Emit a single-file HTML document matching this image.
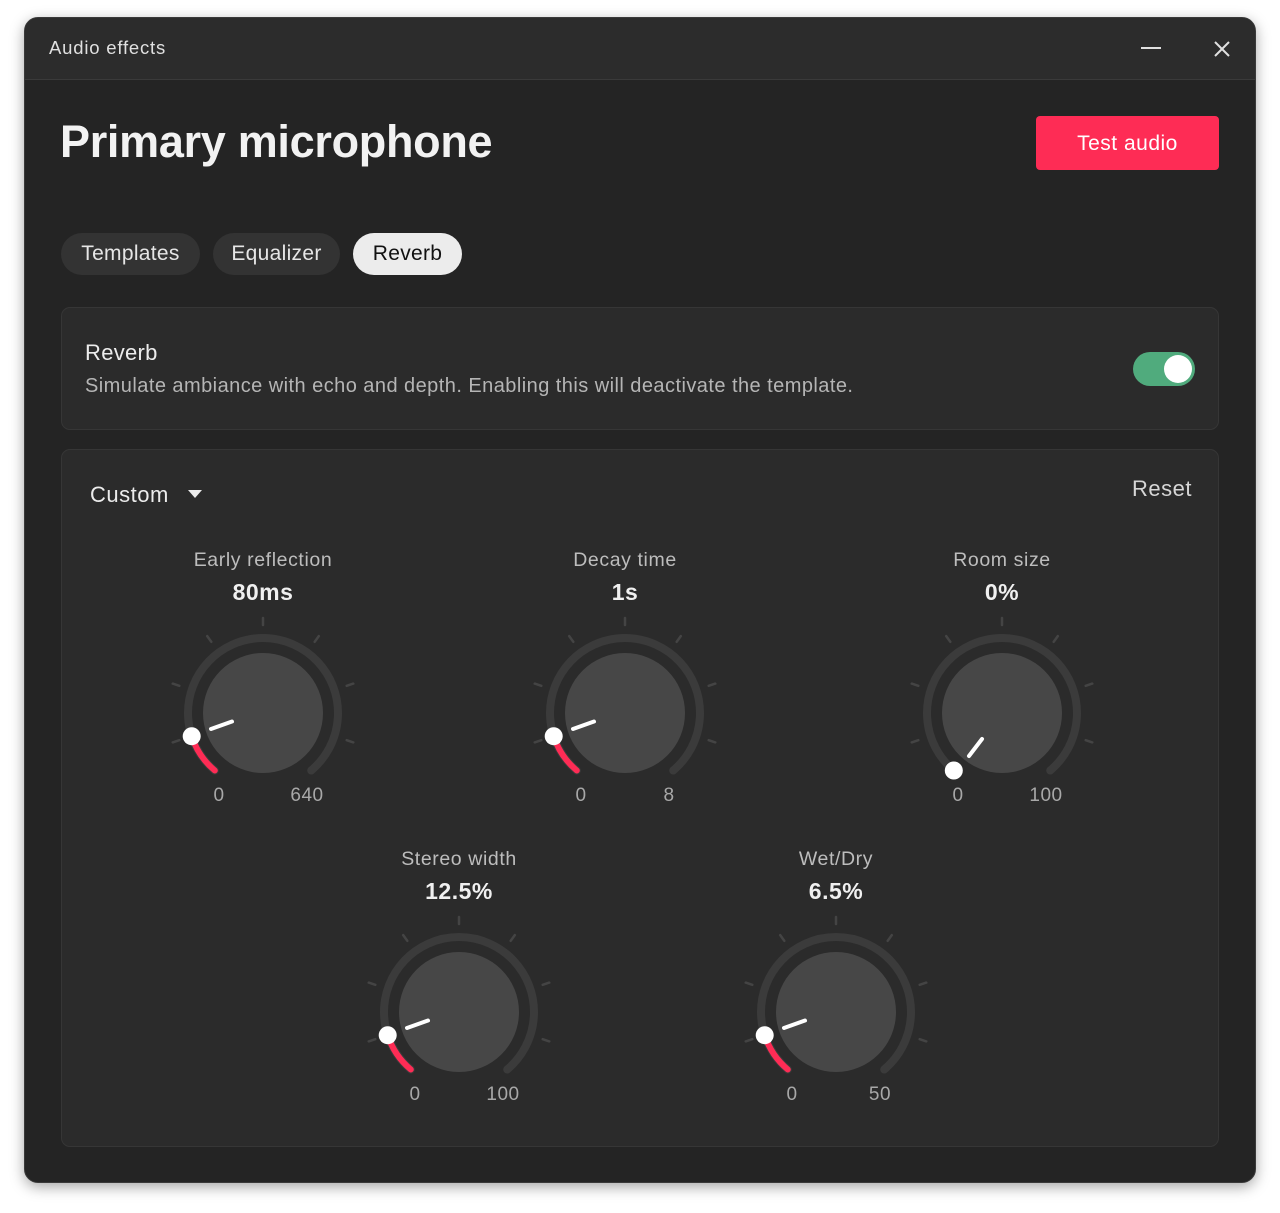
<!DOCTYPE html>
<html><head><meta charset="utf-8"><style>
*{margin:0;padding:0;box-sizing:border-box}
body{width:1280px;height:1213px;background:#fff;font-family:"Liberation Sans",sans-serif;position:relative;overflow:hidden}
.win{position:absolute;left:24px;top:17px;width:1232px;height:1166px;background:#242424;border-radius:14px;overflow:hidden;box-shadow:0 4px 14px rgba(0,0,0,.35);border:1px solid #3a3a3a}
.tb{position:absolute;left:0;top:0;right:0;height:62px;background:#2c2c2c;border-bottom:1px solid #3a3a3a}
.a{position:absolute}
.tab{position:absolute;top:233px;height:42px;border-radius:21px;background:#333;color:#e6e6e6;font-size:21px;line-height:42px;text-align:center;letter-spacing:.3px}
.panel{position:absolute;left:61px;width:1158px;background:#2b2b2b;border:1px solid #363636;border-radius:9px}
.lbl{position:absolute;width:240px;text-align:center;color:#bdbdbd;font-size:19.5px;letter-spacing:.6px}
.val{position:absolute;width:240px;text-align:center;color:#f0f0f0;font-size:23px;font-weight:bold;letter-spacing:.5px}
.mm{position:absolute;color:#a8a8a8;font-size:19px;width:60px;text-align:center;letter-spacing:.5px}
svg.k{position:absolute;width:200px;height:200px}
</style></head><body>
<div class="win">
<div class="tb"><div class="a" style="left:24px;top:19px;color:#e0e0e0;font-size:18.5px;letter-spacing:.8px">Audio effects</div>
<svg class="a" style="left:1114px;top:20px" width="24" height="20"><line x1="2" y1="10" x2="22" y2="10" stroke="#e0e0e0" stroke-width="2"/></svg>
<svg class="a" style="left:1186px;top:20px" width="22" height="22"><path d="M4 4L18 18M18 4L4 18" stroke="#e0e0e0" stroke-width="2"/></svg>
</div>
</div>
<div class="a" style="left:60px;top:116px;color:#f2f2f2;font-size:45px;font-weight:bold;letter-spacing:-0.3px">Primary microphone</div>
<div class="a" style="left:1036px;top:116px;width:183px;height:54px;background:#fe2c55;border-radius:4px;color:#fff;font-size:21px;line-height:56px;text-align:center;letter-spacing:.5px">Test audio</div>
<div class="tab" style="left:61px;width:139px">Templates</div>
<div class="tab" style="left:213px;width:127px">Equalizer</div>
<div class="tab" style="left:353px;width:109px;background:#ececec;color:#111">Reverb</div>
<div class="panel" style="top:307px;height:123px">
<div class="a" style="left:23px;top:32px;color:#ececec;font-size:22px;letter-spacing:.3px">Reverb</div>
<div class="a" style="left:23px;top:67px;color:#b5b5b5;font-size:20px;letter-spacing:.45px">Simulate ambiance with echo and depth. Enabling this will deactivate the template.</div>
<div class="a" style="left:1071px;top:44px;width:62px;height:34px;border-radius:17px;background:#50ab7d"><div class="a" style="left:31px;top:3px;width:28px;height:28px;border-radius:50%;background:#fff"></div></div>
</div>
<div class="panel" style="top:449px;height:698px">
<div class="a" style="left:28px;top:32px;color:#ececec;font-size:22px;letter-spacing:.5px">Custom</div>
<svg class="a" style="left:126px;top:39px" width="14" height="10"><path d="M0 1H14L7 9Z" fill="#ececec"/></svg>
<div class="a" style="left:1070px;top:26px;color:#d6d6d6;font-size:22px;letter-spacing:.5px">Reset</div>
</div>

<svg width="0" height="0" style="position:absolute"><defs>
<g id="base">
<g stroke="#444" stroke-width="2.5" stroke-linecap="round">
<line x1="0" y1="-88" x2="0" y2="-95"/>
<line x1="51.7" y1="-71.2" x2="55.8" y2="-76.9"/><line x1="-51.7" y1="-71.2" x2="-55.8" y2="-76.9"/>
<line x1="83.7" y1="-27.2" x2="90.3" y2="-29.4"/><line x1="-83.7" y1="-27.2" x2="-90.3" y2="-29.4"/>
<line x1="83.7" y1="27.2" x2="90.3" y2="29.4"/><line x1="-83.7" y1="27.2" x2="-90.3" y2="29.4"/>
</g>
<path d="M-48.2 57.5A75 75 0 1 1 48.2 57.5" fill="none" stroke="#3b3b3b" stroke-width="8" stroke-linecap="round"/>
<circle r="60" fill="#474747"/>
</g>
<g id="v1">
<use href="#base"/>
<path d="M-48.2 57.5A75 75 0 0 1 -71.3 23.2" fill="none" stroke="#fe2c55" stroke-width="6" stroke-linecap="round"/>
<line x1="-52" y1="16" x2="-31" y2="8.5" stroke="#fff" stroke-width="4" stroke-linecap="round"/>
<circle cx="-71.3" cy="23.2" r="9" fill="#fff"/>
</g>
</defs></svg>

<svg class="k" style="left:163px;top:613px" viewBox="-100 -100 200 200"><use href="#v1"/></svg>
<svg class="k" style="left:525px;top:613px" viewBox="-100 -100 200 200"><use href="#v1"/></svg>
<svg class="k" style="left:902px;top:613px" viewBox="-100 -100 200 200"><use href="#base"/><line x1="-33" y1="43" x2="-20" y2="26" stroke="#fff" stroke-width="4" stroke-linecap="round"/><circle cx="-48.2" cy="57.5" r="9" fill="#fff"/></svg>
<svg class="k" style="left:359px;top:912px" viewBox="-100 -100 200 200"><use href="#v1"/></svg>
<svg class="k" style="left:736px;top:912px" viewBox="-100 -100 200 200"><use href="#v1"/></svg>

<div class="lbl" style="left:143px;top:549px">Early reflection</div><div class="val" style="left:143px;top:579px">80ms</div>
<div class="mm" style="left:189px;top:785px">0</div><div class="mm" style="left:277px;top:785px">640</div>
<div class="lbl" style="left:505px;top:549px">Decay time</div><div class="val" style="left:505px;top:579px">1s</div>
<div class="mm" style="left:551px;top:785px">0</div><div class="mm" style="left:639px;top:785px">8</div>
<div class="lbl" style="left:882px;top:549px">Room size</div><div class="val" style="left:882px;top:579px">0%</div>
<div class="mm" style="left:928px;top:785px">0</div><div class="mm" style="left:1016px;top:785px">100</div>
<div class="lbl" style="left:339px;top:848px">Stereo width</div><div class="val" style="left:339px;top:878px">12.5%</div>
<div class="mm" style="left:385px;top:1084px">0</div><div class="mm" style="left:473px;top:1084px">100</div>
<div class="lbl" style="left:716px;top:848px">Wet/Dry</div><div class="val" style="left:716px;top:878px">6.5%</div>
<div class="mm" style="left:762px;top:1084px">0</div><div class="mm" style="left:850px;top:1084px">50</div>
</body></html>
